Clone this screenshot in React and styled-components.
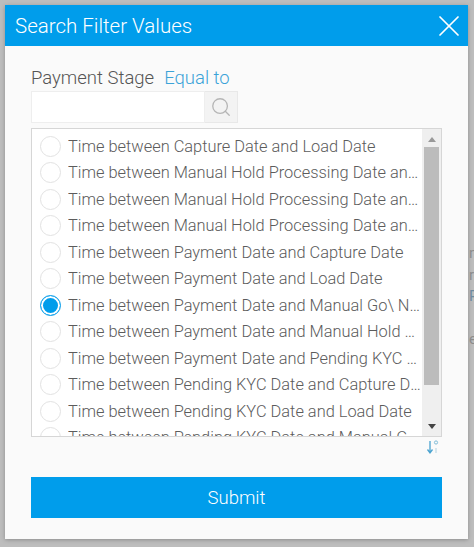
import React from 'react';
import styled, { createGlobalStyle } from 'styled-components';
import { X, Search } from 'lucide-react';

const Global = createGlobalStyle`
  html, body {
    margin: 0;
    height: 547px;
    overflow: hidden;
    background: #bdbdbd;
    font-family: Roboto, "Liberation Sans", sans-serif;
  }
`;

const options = [
  'Time between Capture Date and Load Date',
  'Time between Manual Hold Processing Date and Capture Date',
  'Time between Manual Hold Processing Date and Load Date',
  'Time between Manual Hold Processing Date and Payment Date',
  'Time between Payment Date and Capture Date',
  'Time between Payment Date and Load Date',
  'Time between Payment Date and Manual Go\\ No Go Date',
  'Time between Payment Date and Manual Hold Processing Date',
  'Time between Payment Date and Pending KYC Date',
  'Time between Pending KYC Date and Capture Date Value',
  'Time between Pending KYC Date and Load Date',
  'Time between Pending KYC Date and Manual Go\\ No Go',
];

function App() {
  return (
    <Page>
      <Global />
      <Modal>
        <Header>
          <Title>Search Filter Values</Title>
          <CloseBtn><X size={36} strokeWidth={1.15} color="#fff" /></CloseBtn>
        </Header>
        <Body>
          <LabelRow>
            <span>Payment Stage</span>
            <Operator>Equal to</Operator>
          </LabelRow>
          <SearchRow>
            <SearchInput />
            <SearchBtn><Search size={22} strokeWidth={1.4} color="#b5b5b5" /></SearchBtn>
          </SearchRow>
          <ListBox>
            <List>
              {options.map((o, i) => (
                <Row key={i}>
                  <Radio $on={i === 6} />
                  <RowText>{o}</RowText>
                </Row>
              ))}
            </List>
            <Scrollbar>
              <Arrow />
              <Track><Thumb /></Track>
              <Arrow $down />
            </Scrollbar>
          </ListBox>
          <SortRow>
            <svg width="14" height="15" viewBox="0 0 14 15">
              <path d="M4 1v11M1.5 9.5L4 13l2.5-3.5" fill="none" stroke="#4aa3d0" strokeWidth="1.3" />
              <circle cx="10" cy="2.5" r="1.6" fill="none" stroke="#7fbcd8" strokeWidth="1" />
              <path d="M10 8v5" stroke="#bcd9e6" strokeWidth="1.2" />
            </svg>
          </SortRow>
          <Submit>Submit</Submit>
        </Body>
      </Modal>
      <Behind>
        <BehindLine>n</BehindLine>
        <BehindLine>r</BehindLine>
        <BehindLine $link>R</BehindLine>
        <BehindLine />
        <BehindLine>e</BehindLine>
      </Behind>
    </Page>
  );
}

const Page = styled.div`
  box-sizing: border-box;
  height: 547px;
  padding: 5px 0 8px 5px;
  display: flex;
  gap: 1px;
`;

const Modal = styled.div`
  flex: none;
  width: 463px;
  height: 534px;
  background: #fafafa;
  box-shadow: 0 1px 4px rgba(0, 0, 0, 0.25);
`;

const Behind = styled.div`
  flex: 1;
  min-width: 0;
  overflow: hidden;
  padding-top: 238px;
  font-size: 15px;
  line-height: 21.5px;
`;

const BehindLine = styled.div`
  height: 21.5px;
  color: ${(p) => (p.$link ? '#6f8ba0' : '#8c8c8c')};
`;

const Header = styled.div`
  height: 41px;
  background: #009deb;
  display: flex;
  align-items: center;
  justify-content: space-between;
  padding: 0 1px 0 10px;
`;

const Title = styled.div`
  color: #fff;
  font-size: 20.5px;
  font-weight: 300;
`;

const CloseBtn = styled.div`
  display: flex;
`;

const Body = styled.div`
  padding: 19px 26px 0 26px;
`;

const LabelRow = styled.div`
  display: flex;
  gap: 10px;
  font-size: 18.5px;
  font-weight: 300;
  color: #555;
  line-height: 26px;
`;

const Operator = styled.span`
  color: #3ba3d8;
`;

const SearchRow = styled.div`
  display: flex;
  width: 207px;
  height: 32px;
  margin-bottom: 5px;
`;

const SearchInput = styled.div`
  flex: 1;
  background: #fff;
  border: 1px solid #eeeeee;
`;

const SearchBtn = styled.div`
  width: 32px;
  background: #f3f3f3;
  border: 1px solid #e8e8e8;
  border-left: none;
  display: flex;
  align-items: center;
  justify-content: center;
`;

const ListBox = styled.div`
  box-sizing: border-box;
  width: 411px;
  height: 309px;
  display: flex;
  background: #fff;
  border: 1px solid #d6d6d6;
`;

const List = styled.div`
  flex: 1;
  min-width: 0;
  overflow: hidden;
  padding: 4px 0 0 8px;
`;

const Row = styled.div`
  display: flex;
  align-items: center;
  height: 26.5px;
  gap: 7px;
`;

const Radio = styled.div`
  box-sizing: border-box;
  flex: none;
  width: 21px;
  height: 21px;
  border-radius: 50%;
  border: 1.5px solid ${(p) => (p.$on ? '#1ba5ec' : '#e2e2e2')};
  background: ${(p) => (p.$on ? '#009deb' : '#fff')};
  box-shadow: ${(p) => (p.$on ? 'inset 0 0 0 2px #fff' : 'none')};
`;

const RowText = styled.div`
  flex: 1;
  min-width: 0;
  font-size: 16.4px;
  font-weight: 300;
  color: #5c5c5c;
  white-space: nowrap;
  overflow: hidden;
  text-overflow: ellipsis;
`;

const Scrollbar = styled.div`
  flex: none;
  width: 19px;
  background: #efefef;
  display: flex;
  flex-direction: column;
  align-items: center;
`;

const Arrow = styled.div`
  flex: none;
  margin: ${(p) => (p.$down ? '5px 0 7px' : '8px 0 5px')};
  width: 0;
  height: 0;
  border-left: 4px solid transparent;
  border-right: 4px solid transparent;
  ${(p) => (p.$down ? 'border-top: 5px solid #444;' : 'border-bottom: 5px solid #999;')}
`;

const Track = styled.div`
  flex: 1;
  align-self: stretch;
  padding: 0 2px;
`;

const Thumb = styled.div`
  height: 238px;
  background: #bcbcbc;
`;

const SortRow = styled.div`
  width: 411px;
  display: flex;
  justify-content: flex-end;
  padding: 3px 2px 0 0;
  height: 40px;
  box-sizing: border-box;
`;

const Submit = styled.div`
  width: 411px;
  height: 41px;
  background: #009deb;
  color: #fff;
  font-size: 18.5px;
  font-weight: 300;
  display: flex;
  align-items: center;
  justify-content: center;
`;

export default App;
